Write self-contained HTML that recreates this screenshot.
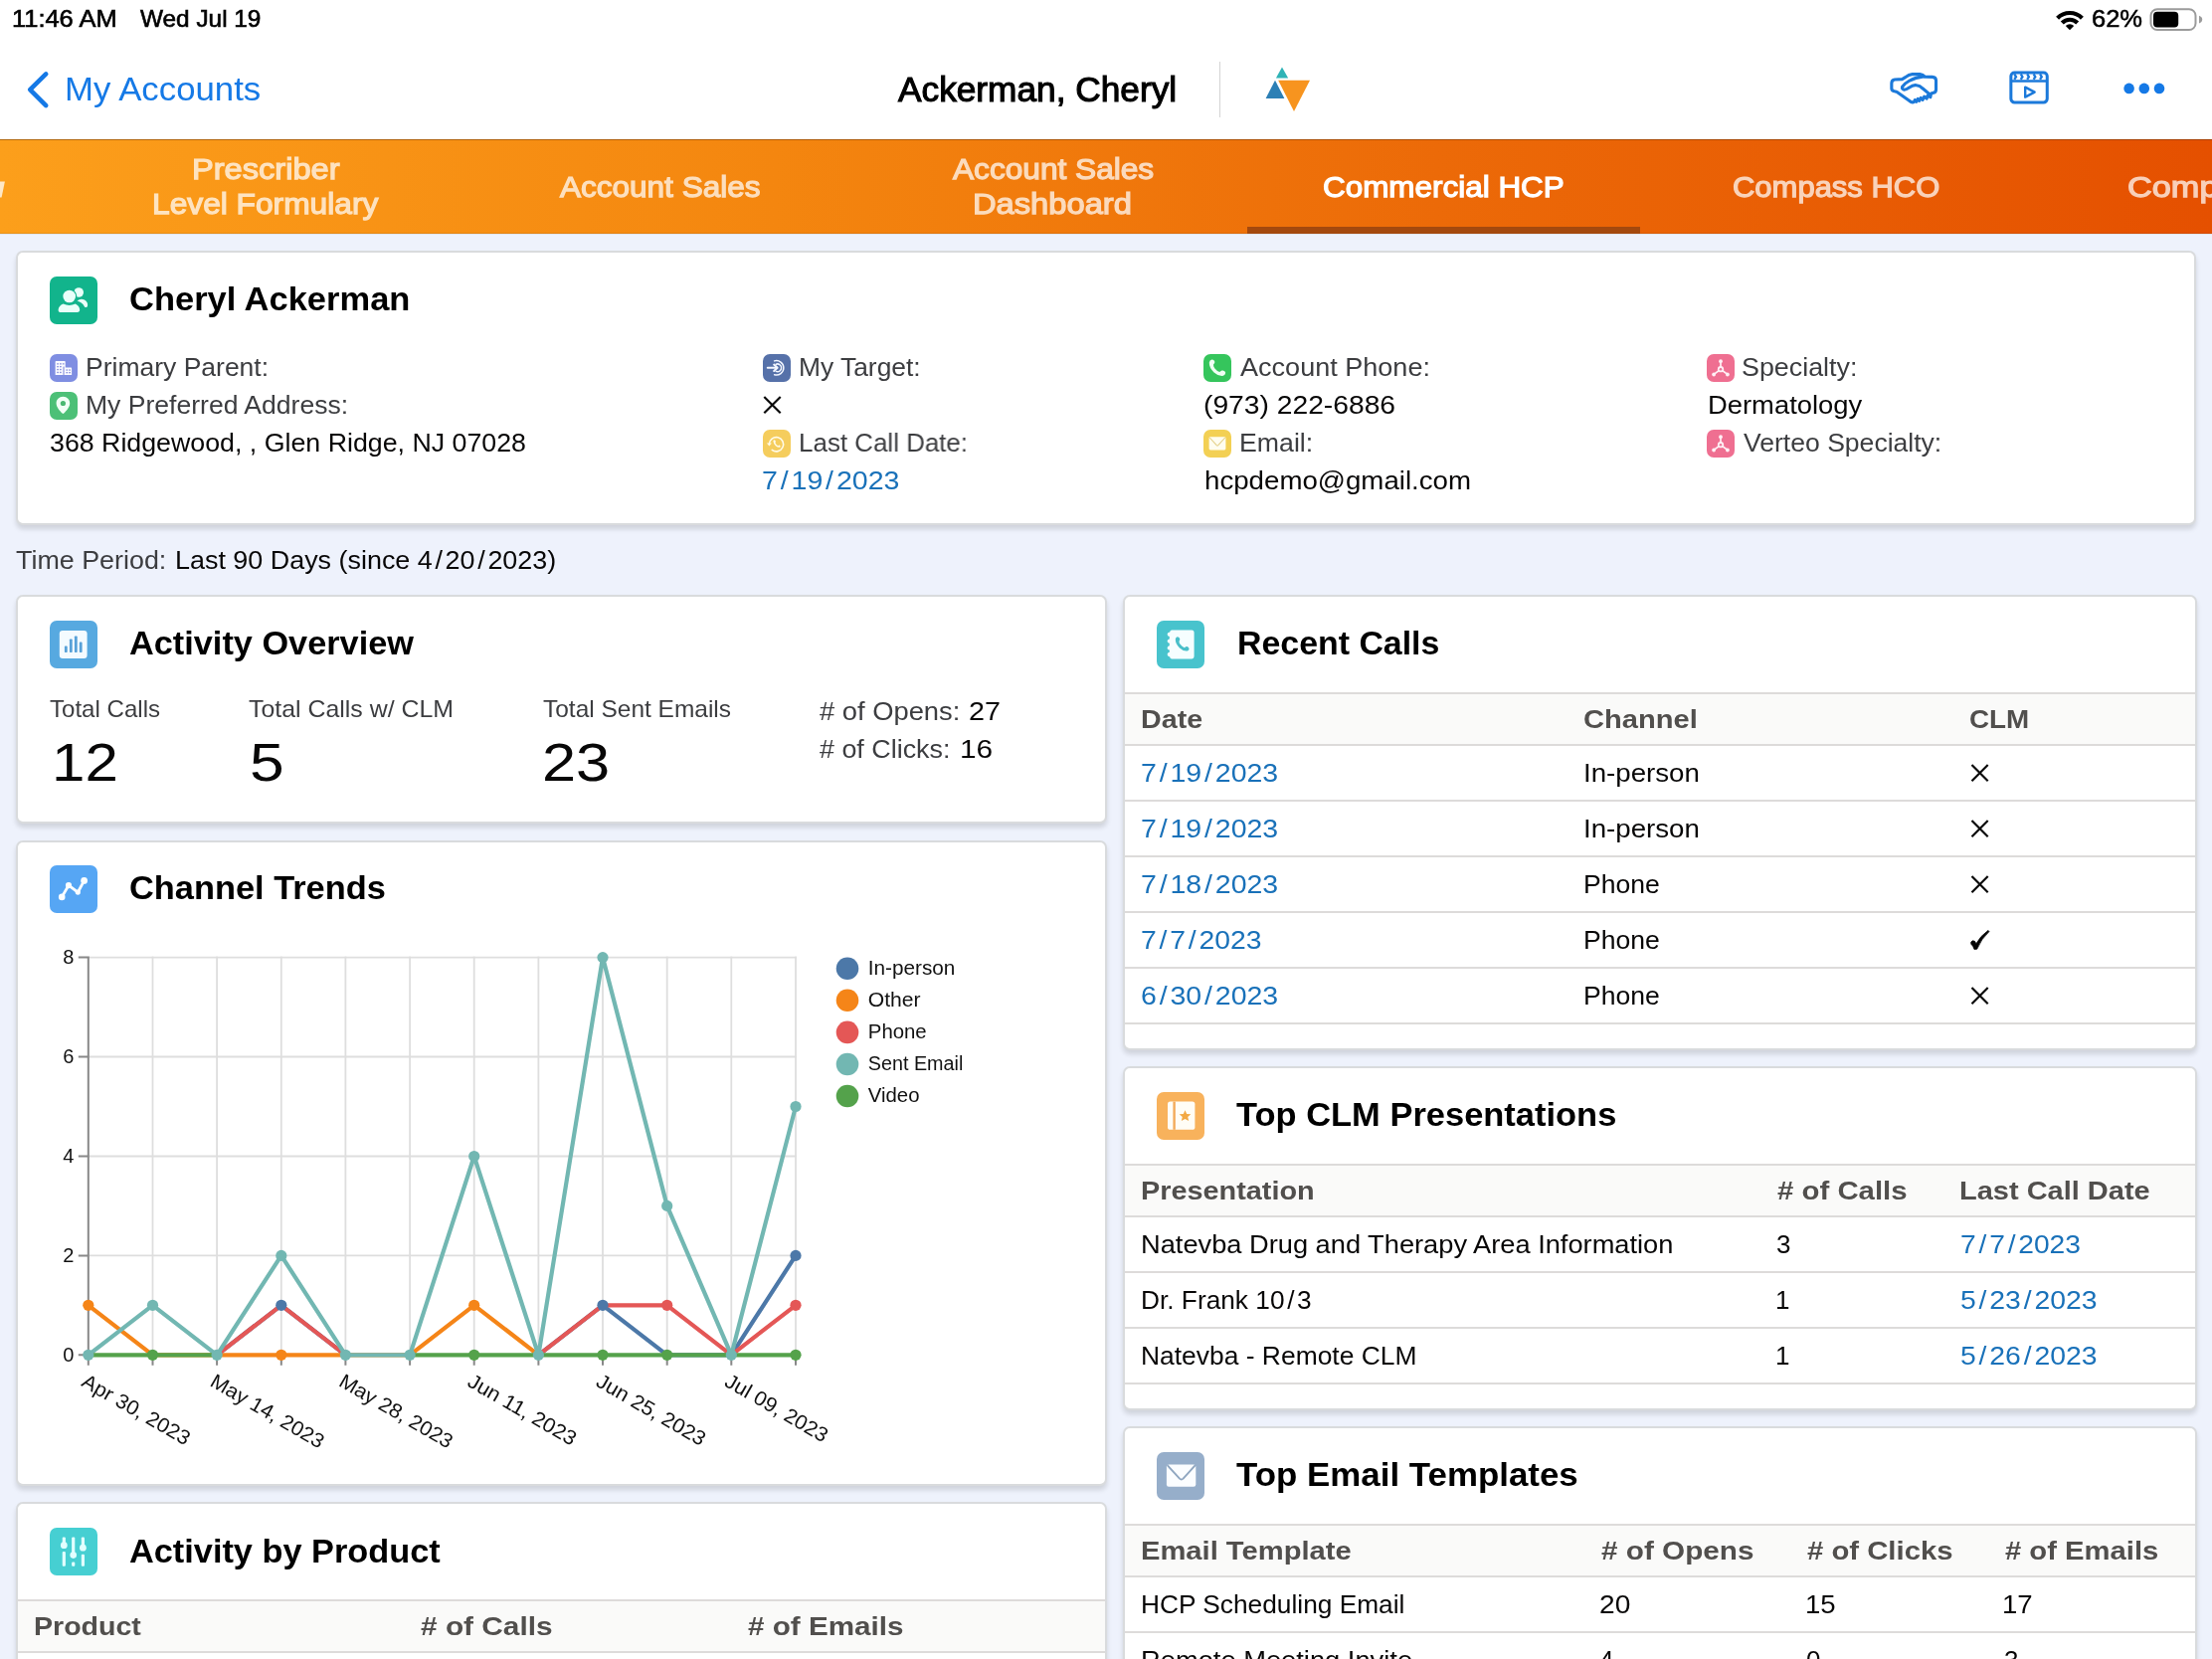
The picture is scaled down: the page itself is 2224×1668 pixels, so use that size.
<!DOCTYPE html>
<html><head><meta charset="utf-8"><title>Ackerman, Cheryl</title>
<style>
html,body{margin:0;padding:0;width:2224px;height:1668px;overflow:hidden;}
body{background:#eef2fc;font-family:'Liberation Sans', sans-serif;}
#root{position:relative;width:2224px;height:1668px;overflow:hidden;background:#eef2fc;}
.t{position:absolute;white-space:pre;transform-origin:0 0;will-change:transform;}
.card{position:absolute;background:#fff;border:2px solid #d9dbdd;border-radius:7px;box-shadow:0 4px 5px rgba(0,0,0,0.13);box-sizing:border-box;}
.hl{position:absolute;height:2px;background:#dddbda;}
.th{position:absolute;background:#fafaf9;}
.abs{position:absolute;}
</style></head><body><div id="root">
<!-- top white bars -->
<div class="abs" style="left:0;top:0;width:2224px;height:140px;background:#fff"></div>
<!-- orange tab bar -->
<div class="abs" style="left:0;top:140px;width:2224px;height:95px;background:linear-gradient(90deg,#fc9f1b 0%,#f4860f 35%,#ec6a08 65%,#e55000 100%)"></div>
<div class="abs" style="left:0;top:140px;width:2224px;height:1px;background:rgba(90,40,0,0.45)"></div>
<div class="abs" style="left:0;top:234px;width:2224px;height:2px;background:linear-gradient(180deg,rgba(0,0,0,0.10),rgba(0,0,0,0.03))"></div>
<div class="abs" style="left:1254px;top:228px;width:395px;height:7px;background:#a4490e"></div>
<!-- nav divider -->
<div class="abs" style="left:1226px;top:62px;width:1px;height:56px;background:#d4d4d4"></div>

<!-- cards -->
<div class="card" style="left:16px;top:252px;width:2192px;height:276px"></div>
<div class="card" style="left:16px;top:598px;width:1097px;height:230px"></div>
<div class="card" style="left:16px;top:845px;width:1097px;height:649px"></div>
<div class="card" style="left:16px;top:1510px;width:1097px;height:300px"></div>
<div class="card" style="left:1129px;top:598px;width:1080px;height:458px"></div>
<div class="card" style="left:1129px;top:1072px;width:1080px;height:346px"></div>
<div class="card" style="left:1129px;top:1434px;width:1080px;height:300px"></div>

<!-- Activity by Product table header -->
<div class="th" style="left:18px;top:1610px;width:1093px;height:50px"></div>
<div class="hl" style="left:18px;top:1608px;width:1093px"></div>
<div class="hl" style="left:18px;top:1660px;width:1093px"></div>

<!-- Recent Calls table -->
<div class="th" style="left:1131px;top:698px;width:1076px;height:50px"></div>
<div class="hl" style="left:1131px;top:696px;width:1076px"></div>
<div class="hl" style="left:1131px;top:748px;width:1076px"></div>
<div class="hl" style="left:1131px;top:804px;width:1076px"></div>
<div class="hl" style="left:1131px;top:860px;width:1076px"></div>
<div class="hl" style="left:1131px;top:916px;width:1076px"></div>
<div class="hl" style="left:1131px;top:972px;width:1076px"></div>
<div class="hl" style="left:1131px;top:1028px;width:1076px"></div>

<!-- Top CLM table -->
<div class="th" style="left:1131px;top:1172px;width:1076px;height:50px"></div>
<div class="hl" style="left:1131px;top:1170px;width:1076px"></div>
<div class="hl" style="left:1131px;top:1222px;width:1076px"></div>
<div class="hl" style="left:1131px;top:1278px;width:1076px"></div>
<div class="hl" style="left:1131px;top:1334px;width:1076px"></div>
<div class="hl" style="left:1131px;top:1390px;width:1076px"></div>

<!-- Email table -->
<div class="th" style="left:1131px;top:1534px;width:1076px;height:50px"></div>
<div class="hl" style="left:1131px;top:1532px;width:1076px"></div>
<div class="hl" style="left:1131px;top:1584px;width:1076px"></div>
<div class="hl" style="left:1131px;top:1640px;width:1076px"></div>

<div class="t" style="left:11.6px;top:7.9px;font:normal 23.6px/23.6px 'Liberation Sans', sans-serif;color:#000;transform:scaleX(1.0779);-webkit-text-stroke:0.6px #000;">11:46 AM</div>
<div class="t" style="left:140.7px;top:7.9px;font:normal 23.6px/23.6px 'Liberation Sans', sans-serif;color:#000;transform:scaleX(1.0325);-webkit-text-stroke:0.6px #000;">Wed Jul 19</div>
<div class="t" style="left:2102.9px;top:7.8px;font:normal 23px/23px 'Liberation Sans', sans-serif;color:#000;transform:scaleX(1.1089);-webkit-text-stroke:0.5px #000;">62%</div>
<div class="t" style="left:64.6px;top:74.0px;font:normal 32.5px/32.5px 'Liberation Sans', sans-serif;color:#1579e6;transform:scaleX(1.0706);">My Accounts</div>
<div class="t" style="left:903.4px;top:72.7px;font:normal 34.5px/34.5px 'Liberation Sans', sans-serif;color:#000;transform:scaleX(1.0216);-webkit-text-stroke:1.1px #000;">Ackerman, Cheryl</div>
<div class="t" style="left:192.8px;top:155.1px;font:normal 30px/30px 'Liberation Sans', sans-serif;color:#fff;opacity:0.73;transform:scaleX(1.0867);-webkit-text-stroke:1.25px currentColor;">Prescriber</div>
<div class="t" style="left:153.4px;top:189.5px;font:normal 30px/30px 'Liberation Sans', sans-serif;color:#fff;opacity:0.73;transform:scaleX(1.0570);-webkit-text-stroke:1.25px currentColor;">Level Formulary</div>
<div class="t" style="left:562.8px;top:173.2px;font:normal 30px/30px 'Liberation Sans', sans-serif;color:#fff;opacity:0.73;transform:scaleX(1.0505);-webkit-text-stroke:1.25px currentColor;">Account Sales</div>
<div class="t" style="left:957.7px;top:155.1px;font:normal 30px/30px 'Liberation Sans', sans-serif;color:#fff;opacity:0.73;transform:scaleX(1.0542);-webkit-text-stroke:1.25px currentColor;">Account Sales</div>
<div class="t" style="left:977.5px;top:189.5px;font:normal 30px/30px 'Liberation Sans', sans-serif;color:#fff;opacity:0.73;transform:scaleX(1.0895);-webkit-text-stroke:1.25px currentColor;">Dashboard</div>
<div class="t" style="left:1330.0px;top:173.2px;font:normal 30px/30px 'Liberation Sans', sans-serif;color:#fff;transform:scaleX(1.0478);-webkit-text-stroke:1.25px currentColor;">Commercial HCP</div>
<div class="t" style="left:1741.9px;top:173.2px;font:normal 30px/30px 'Liberation Sans', sans-serif;color:#fff;opacity:0.73;transform:scaleX(1.0325);-webkit-text-stroke:1.25px currentColor;">Compass HCO</div>
<div class="t" style="left:2138.9px;top:173.2px;font:normal 30px/30px 'Liberation Sans', sans-serif;color:#fff;opacity:0.73;transform:scaleX(1.1429);-webkit-text-stroke:1.25px currentColor;">Compass HCP</div>
<div class="t" style="left:129.9px;top:284.1px;font:bold 33px/33px 'Liberation Sans', sans-serif;color:#000;transform:scaleX(1.0449);">Cheryl Ackerman</div>
<div class="t" style="left:86.0px;top:355.9px;font:normal 26px/26px 'Liberation Sans', sans-serif;color:#3c3d40;transform:scaleX(1.0193);">Primary Parent:</div>
<div class="t" style="left:86.0px;top:393.9px;font:normal 26px/26px 'Liberation Sans', sans-serif;color:#3c3d40;transform:scaleX(1.0213);">My Preferred Address:</div>
<div class="t" style="left:49.6px;top:431.9px;font:normal 26px/26px 'Liberation Sans', sans-serif;color:#080707;transform:scaleX(1.0292);">368 Ridgewood, , Glen Ridge, NJ 07028</div>
<div class="t" style="left:802.6px;top:355.9px;font:normal 26px/26px 'Liberation Sans', sans-serif;color:#3c3d40;transform:scaleX(1.0145);">My Target:</div>
<div class="t" style="left:802.6px;top:431.9px;font:normal 26px/26px 'Liberation Sans', sans-serif;color:#3c3d40;transform:scaleX(0.9970);">Last Call Date:</div>
<div class="t" style="left:765.9px;top:469.9px;font:normal 26px/26px 'Liberation Sans', sans-serif;color:#1971b9;transform:scaleX(1.0976);">7<span style="margin:0 0.1em">/</span>19<span style="margin:0 0.1em">/</span>2023</div>
<div class="t" style="left:1247.0px;top:355.9px;font:normal 26px/26px 'Liberation Sans', sans-serif;color:#3c3d40;transform:scaleX(1.0403);">Account Phone:</div>
<div class="t" style="left:1210.1px;top:393.9px;font:normal 26px/26px 'Liberation Sans', sans-serif;color:#080707;transform:scaleX(1.0857);">(973) 222-6886</div>
<div class="t" style="left:1246.1px;top:431.9px;font:normal 26px/26px 'Liberation Sans', sans-serif;color:#3c3d40;transform:scaleX(1.0265);">Email:</div>
<div class="t" style="left:1210.9px;top:469.9px;font:normal 26px/26px 'Liberation Sans', sans-serif;color:#080707;transform:scaleX(1.0645);">hcpdemo@gmail.com</div>
<div class="t" style="left:1750.9px;top:355.9px;font:normal 26px/26px 'Liberation Sans', sans-serif;color:#3c3d40;transform:scaleX(1.0324);">Specialty:</div>
<div class="t" style="left:1716.7px;top:393.9px;font:normal 26px/26px 'Liberation Sans', sans-serif;color:#080707;transform:scaleX(1.0531);">Dermatology</div>
<div class="t" style="left:1753.0px;top:431.9px;font:normal 26px/26px 'Liberation Sans', sans-serif;color:#3c3d40;transform:scaleX(1.0212);">Verteo Specialty:</div>
<div class="t" style="left:15.5px;top:549.7px;font:normal 26px/26px 'Liberation Sans', sans-serif;color:#3c3d40;transform:scaleX(1.0336);">Time Period:</div>
<div class="t" style="left:176.2px;top:549.7px;font:normal 26px/26px 'Liberation Sans', sans-serif;color:#080707;transform:scaleX(1.0349);">Last 90 Days (since 4<span style="margin:0 0.1em">/</span>20<span style="margin:0 0.1em">/</span>2023)</div>
<div class="t" style="left:129.9px;top:629.8px;font:bold 33px/33px 'Liberation Sans', sans-serif;color:#000;transform:scaleX(1.0394);">Activity Overview</div>
<div class="t" style="left:49.6px;top:701.8px;font:normal 23.6px/23.6px 'Liberation Sans', sans-serif;color:#3c3d40;transform:scaleX(1.0206);">Total Calls</div>
<div class="t" style="left:249.5px;top:701.8px;font:normal 23.6px/23.6px 'Liberation Sans', sans-serif;color:#3c3d40;transform:scaleX(1.0549);">Total Calls w/ CLM</div>
<div class="t" style="left:546.2px;top:701.8px;font:normal 23.6px/23.6px 'Liberation Sans', sans-serif;color:#3c3d40;transform:scaleX(1.0370);">Total Sent Emails</div>
<div class="t" style="left:51.7px;top:740.2px;font:normal 53.5px/53.5px 'Liberation Sans', sans-serif;color:#080707;transform:scaleX(1.1226);">12</div>
<div class="t" style="left:250.9px;top:740.2px;font:normal 53.5px/53.5px 'Liberation Sans', sans-serif;color:#080707;transform:scaleX(1.1640);">5</div>
<div class="t" style="left:545.2px;top:740.2px;font:normal 53.5px/53.5px 'Liberation Sans', sans-serif;color:#080707;transform:scaleX(1.1463);">23</div>
<div class="t" style="left:824.3px;top:702.1px;font:normal 26px/26px 'Liberation Sans', sans-serif;color:#3c3d40;transform:scaleX(1.0515);"># of Opens:</div>
<div class="t" style="left:973.6px;top:702.1px;font:normal 26px/26px 'Liberation Sans', sans-serif;color:#080707;transform:scaleX(1.1037);">27</div>
<div class="t" style="left:824.3px;top:739.9px;font:normal 26px/26px 'Liberation Sans', sans-serif;color:#3c3d40;transform:scaleX(1.0336);"># of Clicks:</div>
<div class="t" style="left:965.2px;top:739.9px;font:normal 26px/26px 'Liberation Sans', sans-serif;color:#080707;transform:scaleX(1.1462);">16</div>
<div class="t" style="left:129.6px;top:876.0px;font:bold 33px/33px 'Liberation Sans', sans-serif;color:#000;transform:scaleX(1.0416);">Channel Trends</div>
<div class="t" style="left:129.6px;top:1543.0px;font:bold 33px/33px 'Liberation Sans', sans-serif;color:#000;transform:scaleX(1.0398);">Activity by Product</div>
<div class="t" style="left:34.0px;top:1622.0px;font:bold 26.5px/26.5px 'Liberation Sans', sans-serif;color:#514f4d;transform:scaleX(1.0776);">Product</div>
<div class="t" style="left:422.8px;top:1622.0px;font:bold 26.5px/26.5px 'Liberation Sans', sans-serif;color:#514f4d;transform:scaleX(1.1256);"># of Calls</div>
<div class="t" style="left:751.9px;top:1622.0px;font:bold 26.5px/26.5px 'Liberation Sans', sans-serif;color:#514f4d;transform:scaleX(1.1180);"># of Emails</div>
<div class="t" style="left:1243.5px;top:629.9px;font:bold 33px/33px 'Liberation Sans', sans-serif;color:#000;transform:scaleX(1.0267);">Recent Calls</div>
<div class="t" style="left:1147.2px;top:709.5px;font:bold 26.5px/26.5px 'Liberation Sans', sans-serif;color:#514f4d;transform:scaleX(1.0818);">Date</div>
<div class="t" style="left:1591.7px;top:709.5px;font:bold 26.5px/26.5px 'Liberation Sans', sans-serif;color:#514f4d;transform:scaleX(1.0980);">Channel</div>
<div class="t" style="left:1979.8px;top:709.5px;font:bold 26.5px/26.5px 'Liberation Sans', sans-serif;color:#514f4d;transform:scaleX(1.0491);">CLM</div>
<div class="t" style="left:1146.5px;top:763.9px;font:normal 26px/26px 'Liberation Sans', sans-serif;color:#1971b9;transform:scaleX(1.0960);">7<span style="margin:0 0.1em">/</span>19<span style="margin:0 0.1em">/</span>2023</div>
<div class="t" style="left:1591.9px;top:763.9px;font:normal 26px/26px 'Liberation Sans', sans-serif;color:#080707;transform:scaleX(1.0642);">In-person</div>
<div class="t" style="left:1146.5px;top:819.9px;font:normal 26px/26px 'Liberation Sans', sans-serif;color:#1971b9;transform:scaleX(1.0960);">7<span style="margin:0 0.1em">/</span>19<span style="margin:0 0.1em">/</span>2023</div>
<div class="t" style="left:1591.9px;top:819.9px;font:normal 26px/26px 'Liberation Sans', sans-serif;color:#080707;transform:scaleX(1.0642);">In-person</div>
<div class="t" style="left:1146.5px;top:875.9px;font:normal 26px/26px 'Liberation Sans', sans-serif;color:#1971b9;transform:scaleX(1.0960);">7<span style="margin:0 0.1em">/</span>18<span style="margin:0 0.1em">/</span>2023</div>
<div class="t" style="left:1592.0px;top:875.9px;font:normal 26px/26px 'Liberation Sans', sans-serif;color:#080707;transform:scaleX(1.0208);">Phone</div>
<div class="t" style="left:1146.5px;top:931.9px;font:normal 26px/26px 'Liberation Sans', sans-serif;color:#1971b9;transform:scaleX(1.0891);">7<span style="margin:0 0.1em">/</span>7<span style="margin:0 0.1em">/</span>2023</div>
<div class="t" style="left:1592.0px;top:931.9px;font:normal 26px/26px 'Liberation Sans', sans-serif;color:#080707;transform:scaleX(1.0208);">Phone</div>
<div class="t" style="left:1146.5px;top:987.9px;font:normal 26px/26px 'Liberation Sans', sans-serif;color:#1971b9;transform:scaleX(1.0960);">6<span style="margin:0 0.1em">/</span>30<span style="margin:0 0.1em">/</span>2023</div>
<div class="t" style="left:1592.0px;top:987.9px;font:normal 26px/26px 'Liberation Sans', sans-serif;color:#080707;transform:scaleX(1.0208);">Phone</div>
<div class="t" style="left:1242.6px;top:1103.9px;font:bold 33px/33px 'Liberation Sans', sans-serif;color:#000;transform:scaleX(1.0444);">Top CLM Presentations</div>
<div class="t" style="left:1147.2px;top:1183.8px;font:bold 26.5px/26.5px 'Liberation Sans', sans-serif;color:#514f4d;transform:scaleX(1.0879);">Presentation</div>
<div class="t" style="left:1786.7px;top:1183.8px;font:bold 26.5px/26.5px 'Liberation Sans', sans-serif;color:#514f4d;transform:scaleX(1.1085);"># of Calls</div>
<div class="t" style="left:1969.5px;top:1183.8px;font:bold 26.5px/26.5px 'Liberation Sans', sans-serif;color:#514f4d;transform:scaleX(1.0936);">Last Call Date</div>
<div class="t" style="left:1147.3px;top:1237.9px;font:normal 26px/26px 'Liberation Sans', sans-serif;color:#080707;transform:scaleX(1.0474);">Natevba Drug and Therapy Area Information</div>
<div class="t" style="left:1786.0px;top:1237.9px;font:normal 26px/26px 'Liberation Sans', sans-serif;color:#080707;">3</div>
<div class="t" style="left:1970.6px;top:1237.9px;font:normal 26px/26px 'Liberation Sans', sans-serif;color:#1971b9;transform:scaleX(1.0836);">7<span style="margin:0 0.1em">/</span>7<span style="margin:0 0.1em">/</span>2023</div>
<div class="t" style="left:1147.4px;top:1293.9px;font:normal 26px/26px 'Liberation Sans', sans-serif;color:#080707;transform:scaleX(1.0102);">Dr. Frank 10<span style="margin:0 0.1em">/</span>3</div>
<div class="t" style="left:1785.0px;top:1293.9px;font:normal 26px/26px 'Liberation Sans', sans-serif;color:#080707;">1</div>
<div class="t" style="left:1970.6px;top:1293.9px;font:normal 26px/26px 'Liberation Sans', sans-serif;color:#1971b9;transform:scaleX(1.0911);">5<span style="margin:0 0.1em">/</span>23<span style="margin:0 0.1em">/</span>2023</div>
<div class="t" style="left:1147.4px;top:1349.9px;font:normal 26px/26px 'Liberation Sans', sans-serif;color:#080707;transform:scaleX(1.0160);">Natevba - Remote CLM</div>
<div class="t" style="left:1785.0px;top:1349.9px;font:normal 26px/26px 'Liberation Sans', sans-serif;color:#080707;">1</div>
<div class="t" style="left:1970.6px;top:1349.9px;font:normal 26px/26px 'Liberation Sans', sans-serif;color:#1971b9;transform:scaleX(1.0911);">5<span style="margin:0 0.1em">/</span>26<span style="margin:0 0.1em">/</span>2023</div>
<div class="t" style="left:1242.6px;top:1465.9px;font:bold 33px/33px 'Liberation Sans', sans-serif;color:#000;transform:scaleX(1.0571);">Top Email Templates</div>
<div class="t" style="left:1147.2px;top:1546.3px;font:bold 26.5px/26.5px 'Liberation Sans', sans-serif;color:#514f4d;transform:scaleX(1.1000);">Email Template</div>
<div class="t" style="left:1609.7px;top:1546.3px;font:bold 26.5px/26.5px 'Liberation Sans', sans-serif;color:#514f4d;transform:scaleX(1.1206);"># of Opens</div>
<div class="t" style="left:1816.9px;top:1546.3px;font:bold 26.5px/26.5px 'Liberation Sans', sans-serif;color:#514f4d;transform:scaleX(1.1053);"># of Clicks</div>
<div class="t" style="left:2015.5px;top:1546.3px;font:bold 26.5px/26.5px 'Liberation Sans', sans-serif;color:#514f4d;transform:scaleX(1.1029);"># of Emails</div>
<div class="t" style="left:1147.4px;top:1599.8px;font:normal 26px/26px 'Liberation Sans', sans-serif;color:#080707;transform:scaleX(1.0108);">HCP Scheduling Email</div>
<div class="t" style="left:1607.6px;top:1599.8px;font:normal 26px/26px 'Liberation Sans', sans-serif;color:#080707;transform:scaleX(1.0815);">20</div>
<div class="t" style="left:1814.8px;top:1599.8px;font:normal 26px/26px 'Liberation Sans', sans-serif;color:#080707;transform:scaleX(1.0615);">15</div>
<div class="t" style="left:2013.4px;top:1599.8px;font:normal 26px/26px 'Liberation Sans', sans-serif;color:#080707;transform:scaleX(1.0615);">17</div>
<div class="t" style="left:1147.3px;top:1655.8px;font:normal 26px/26px 'Liberation Sans', sans-serif;color:#080707;transform:scaleX(1.0498);">Remote Meeting Invite</div>
<div class="t" style="left:1607.7px;top:1655.8px;font:normal 26px/26px 'Liberation Sans', sans-serif;color:#080707;">4</div>
<div class="t" style="left:1815.9px;top:1655.8px;font:normal 26px/26px 'Liberation Sans', sans-serif;color:#080707;">0</div>
<div class="t" style="left:2014.5px;top:1655.8px;font:normal 26px/26px 'Liberation Sans', sans-serif;color:#080707;">3</div>
<!-- status: wifi -->
<svg class="abs" style="left:2064px;top:6px" width="36" height="28" viewBox="2064 6 36 28">
<g fill="none" stroke="#000" stroke-width="4.2">
<path d="M2068.6 18.2 A17.4 17.4 0 0 1 2093.4 18.2"/>
<path d="M2073.3 23 A10.8 10.8 0 0 1 2088.7 23"/>
</g>
<path d="M2081 30.2 L2076.8 26 A5.9 5.9 0 0 1 2085.2 26 Z" fill="#000"/>
</svg>
<!-- battery -->
<svg class="abs" style="left:2158px;top:5px" width="60" height="30" viewBox="2158 5 60 30">
<rect x="2162.5" y="9.2" width="45" height="20.8" rx="6.5" fill="none" stroke="#9b9b9b" stroke-width="2"/>
<rect x="2165" y="11.8" width="25.2" height="15.8" rx="4" fill="#000"/>
<path d="M2211 15.8 Q2214.2 17 2214.2 19.6 Q2214.2 22.4 2211 23.6 Z" fill="#9b9b9b"/>
</svg>
<!-- back chevron -->
<svg class="abs" style="left:20px;top:66px" width="36" height="50" viewBox="20 66 36 50">
<path d="M46.2 74.4 L30.2 90.2 L46.2 106.1" fill="none" stroke="#1579e6" stroke-width="4.6" stroke-linecap="round" stroke-linejoin="round"/>
</svg>
<!-- logo -->
<svg class="abs" style="left:1268px;top:62px" width="54" height="56" viewBox="1268 62 54 56">
<path d="M1289 67.6 L1282.9 78.4 L1295.2 78.4 Z" fill="#2fb3b6"/>
<path d="M1282 80.8 L1272.6 99 L1291.4 99 Z" fill="#2c7fb5"/>
<path d="M1285.2 80.8 L1317 80.8 L1301 112 Z" fill="#f7941f"/>
</svg>
<!-- handshake + clapper (coords in 11.64x zoom space) -->
<svg class="abs" style="left:1890px;top:60px" width="190" height="58" viewBox="0 0 2212 675">
<g fill="none" stroke="#1b79da" stroke-width="36" stroke-linejoin="round" stroke-linecap="round">
<path d="M262 228 L175 232 Q138 236 138 275 L138 340 Q140 370 182 372 L205 380 L345 480 Q380 512 402 492 L410 472 L428 492 L445 458 L462 482 L480 446 L502 470 L520 432 L548 456 L560 420 L592 438 L600 396 L630 388 Q658 380 658 345 L658 240 Q655 204 615 202 L528 200 Q505 170 470 168 L380 170 Q340 172 300 205 Z"/>
<path d="M515 196 Q420 205 340 250 Q285 280 262 318 Q255 345 285 352 Q310 350 345 325 Q395 290 430 300 Q470 305 500 335 L592 412"/>
</g>
<g fill="none" stroke="#1b79da" stroke-width="35" stroke-linejoin="round">
<rect x="1535" y="150" width="424" height="350" rx="42"/>
<path d="M1535 250 L1959 250" stroke-width="28"/>
<path d="M1702 322 L1702 438 L1812 380 Z" stroke-width="28"/>
</g>
<g fill="none" stroke="#1b79da" stroke-width="27" stroke-linejoin="miter">
<path d="M1575 168 L1595 200 L1575 232"/>
<path d="M1650 168 L1670 200 L1650 232"/>
<path d="M1725 168 L1745 200 L1725 232"/>
<path d="M1800 168 L1820 200 L1800 232"/>
<path d="M1875 168 L1895 200 L1875 232"/>
</g>
</svg>
<!-- more dots -->
<svg class="abs" style="left:2130px;top:80px" width="52" height="18" viewBox="2130 80 52 18">
<circle cx="2140.6" cy="88.9" r="5.3" fill="#1579e6"/><circle cx="2155.8" cy="88.9" r="5.3" fill="#1579e6"/><circle cx="2171" cy="88.9" r="5.3" fill="#1579e6"/>
</svg>

<!-- ===== 48px card icons ===== -->
<!-- people -->
<svg class="abs" style="left:50px;top:278px" width="48" height="48" viewBox="0 0 48 48">
<rect width="48" height="48" rx="7" fill="#12b48c"/>
<circle cx="29.2" cy="16" r="4.8" fill="#e9fff9"/>
<path d="M27.6 24.4 Q31.2 21.6 35 23.6 Q38.8 26 38 30 Q37.2 31.4 35.2 30.8 Q34.4 28 31.4 26.2 Q29.6 25.2 27.6 24.4 Z" fill="#e9fff9"/>
<circle cx="19.7" cy="20" r="7.6" fill="#12b48c"/>
<circle cx="19.7" cy="20" r="6.3" fill="#e9fff9"/>
<path d="M8.6 33.4 Q9 29.5 13.5 27.6 Q19.7 30.2 25.8 27.6 Q30 29.6 30.2 33.6 Q30.2 36 27.6 36 L11.2 36 Q8.6 36 8.6 33.4 Z" fill="#e9fff9" stroke="#12b48c" stroke-width="0"/>
</svg>
<!-- activity overview -->
<svg class="abs" style="left:50px;top:624px" width="48" height="48" viewBox="0 0 48 48">
<rect width="48" height="48" rx="7" fill="#57a9e0"/>
<rect x="9.8" y="10" width="27.8" height="28" rx="3.2" fill="#f4fbff"/>
<g fill="#57a1d8"><rect x="14.9" y="25.6" width="2.8" height="6.4" rx="0.8"/><rect x="19.9" y="18.4" width="2.8" height="13.6" rx="0.8"/><rect x="24.9" y="15.5" width="2.8" height="16.5" rx="0.8"/><rect x="29.8" y="21.6" width="2.8" height="10.4" rx="0.8"/></g>
</svg>
<!-- channel trends -->
<svg class="abs" style="left:50px;top:870px" width="48" height="48" viewBox="0 0 48 48">
<rect width="48" height="48" rx="7" fill="#56a6f4"/>
<path d="M12.2 31.9 L19 20.1 L28.3 27.1 L34.6 15.4" fill="none" stroke="#fbfeff" stroke-width="2.9" stroke-linejoin="round" stroke-linecap="round"/>
<circle cx="12.2" cy="31.9" r="3.3" fill="#fbfeff"/><circle cx="19" cy="20.1" r="3.1" fill="#fbfeff"/><circle cx="28.3" cy="27.1" r="2.6" fill="#fbfeff"/><circle cx="34.6" cy="15.4" r="3.4" fill="#fbfeff"/>
</svg>
<!-- activity by product (sliders) -->
<svg class="abs" style="left:50px;top:1536px" width="48" height="48" viewBox="0 0 48 48">
<rect width="48" height="48" rx="7" fill="#46cfd2"/>
<g fill="#e2ffff">
<rect x="12.7" y="9.4" width="3.2" height="7" rx="1"/><circle cx="14.3" cy="17.7" r="3.4"/><rect x="12.7" y="24" width="3.2" height="14.8" rx="1"/>
<rect x="22.1" y="9.4" width="3.2" height="17" rx="1"/><circle cx="23.7" cy="27.6" r="3.3"/><rect x="22.1" y="34.6" width="3.2" height="4.2" rx="1"/>
<rect x="31.8" y="9.4" width="3.2" height="9.5" rx="1"/><circle cx="33.4" cy="20.2" r="3.4"/><rect x="31.8" y="26.7" width="3.2" height="12.1" rx="1"/>
</g>
</svg>
<!-- recent calls -->
<svg class="abs" style="left:1163px;top:624px" width="48" height="48" viewBox="0 0 48 48">
<rect width="48" height="48" rx="7" fill="#48c3cd"/>
<path d="M15.2 9.4 L35.2 9.4 Q37.6 9.4 37.6 11.8 L37.6 36 Q37.6 38.4 35.2 38.4 L15.2 38.4 Q13.4 38.4 13.2 36.4 Q10.6 36 10.6 34 Q10.6 32.2 12.8 31.8 L12.8 29.6 Q10.6 29.2 10.6 27.4 Q10.6 25.6 12.8 25.2 L12.8 22.8 Q10.6 22.4 10.6 20.6 Q10.6 18.8 12.8 18.4 L12.8 16 Q10.6 15.6 10.6 13.8 Q10.6 12 13.2 11.6 Q13.4 9.4 15.2 9.4 Z" fill="#f6feff"/>
<path d="M20.8 16.2 Q19.2 16.6 18.8 18.4 Q18.6 23 23 27.4 Q27.2 31.2 31 30.4 Q32.6 29.8 32.6 28.2 Q32.2 26.6 30.4 26 Q29 26 28 27.2 Q25.6 26.4 23.6 23.8 Q22.2 22 22.6 20.4 Q23.6 19.4 23.2 18 Q22.4 16.2 20.8 16.2 Z" fill="#48bfc9"/>
</svg>
<!-- top CLM -->
<svg class="abs" style="left:1163px;top:1098px" width="48" height="48" viewBox="0 0 48 48">
<rect width="48" height="48" rx="7" fill="#f8b25c"/>
<rect x="11" y="9.6" width="27.4" height="28.2" rx="2.6" fill="#fffdf6"/>
<rect x="16.4" y="9.6" width="2.4" height="28.2" fill="#f3ab5a"/>
<path d="M28.5 18.2 L30.2 22 L34.3 22.3 L31.2 25 L32.2 29 L28.5 26.9 L24.8 29 L25.8 25 L22.7 22.3 L26.8 22 Z" fill="#f3a944"/>
</svg>
<!-- top email -->
<svg class="abs" style="left:1163px;top:1460px" width="48" height="48" viewBox="0 0 48 48">
<rect width="48" height="48" rx="7" fill="#96aeca"/>
<rect x="9.9" y="12.4" width="29.4" height="22.4" rx="2.2" fill="#fbfdff"/>
<path d="M10.6 13.2 L23 26.6 Q24.8 28.2 26.6 26.6 L38.8 13.2" fill="none" stroke="#8fa6c0" stroke-width="1.9" stroke-linejoin="round"/>
</svg>

<!-- ===== 28px field icons ===== -->
<!-- building -->
<svg class="abs" style="left:50px;top:356px" width="28" height="28" viewBox="0 0 28 28">
<rect width="28" height="28" rx="7" fill="#7f8ee2"/>
<path d="M5.6 7.8 Q5.6 7 6.4 7 L14.9 7 Q15.7 7 15.7 7.8 L15.7 13.6 L21.3 13.6 Q22.1 13.6 22.1 14.4 L22.1 20.9 L5.6 20.9 Z" fill="#fbfbff"/>
<g fill="#8b93dc"><rect x="7.2" y="9.2" width="1.7" height="1.3"/><rect x="10" y="9.2" width="1.7" height="1.3"/><rect x="12.8" y="9.2" width="1.7" height="1.3"/>
<rect x="7.2" y="12" width="1.7" height="1.3"/><rect x="10" y="12" width="1.7" height="1.3"/>
<rect x="7.2" y="14.9" width="1.7" height="1.3"/><rect x="10" y="14.9" width="1.7" height="1.3"/>
<rect x="7.2" y="17.8" width="1.7" height="1.3"/><rect x="10" y="17.8" width="1.7" height="1.3"/>
<rect x="13.4" y="12.6" width="1.2" height="8.3"/>
<rect x="16.4" y="15.4" width="1.7" height="1.3"/><rect x="19.2" y="15.4" width="1.7" height="1.3"/><rect x="16.4" y="18" width="1.7" height="1.3"/><rect x="19.2" y="18" width="1.7" height="1.3"/></g>
</svg>
<!-- pin -->
<svg class="abs" style="left:50px;top:394px" width="28" height="28" viewBox="0 0 28 28">
<rect width="28" height="28" rx="7" fill="#4cc077"/>
<path d="M13.4 4.8 C17.4 4.8 20.2 7.8 20.2 11.4 C20.2 15.4 16.4 19 14.2 21.6 Q13.4 22.4 12.6 21.6 C10.4 19 6.6 15.4 6.6 11.4 C6.6 7.8 9.4 4.8 13.4 4.8 Z" fill="#f1fff6"/>
<circle cx="13.4" cy="11.5" r="2.6" fill="#4ab872"/>
</svg>
<!-- target -->
<svg class="abs" style="left:767px;top:356px" width="28" height="28" viewBox="0 0 28 28">
<rect width="28" height="28" rx="7" fill="#5671a9"/>
<g fill="none" stroke="#f2f6ff" stroke-linecap="round">
<path d="M11.6 6.9 A7.2 7.2 0 1 1 11.6 20.7" stroke-width="1.5"/>
<path d="M13.2 10.2 A3.9 3.9 0 1 1 13.2 17.4" stroke-width="1.5"/>
<path d="M4.8 13.8 L14 13.8" stroke-width="2.1"/>
<path d="M11.2 10.6 L14.6 13.8 L11.2 17" stroke-width="2.1" stroke-linejoin="round"/>
</g>
</svg>
<!-- call history -->
<svg class="abs" style="left:767px;top:432px" width="28" height="28" viewBox="0 0 28 28">
<rect width="28" height="28" rx="7" fill="#f5cd5d"/>
<path d="M6.4 14.6 A7.1 7.1 0 1 1 9.2 20.4" fill="none" stroke="#fffbe8" stroke-width="1.6" stroke-linecap="round"/>
<path d="M3.9 13.6 L6.4 16.6 L8.9 13.4 Z" fill="#fffbe8"/>
<path d="M11.3 10.3 Q10.4 10.6 10.4 11.6 Q10.6 14.2 12.8 16.2 Q14.8 18 17 17.8 Q17.8 17.4 17.6 16.6 Q17.2 15.8 16.2 15.6 L15.4 16.2 Q14 15.6 13 14.2 Q12.4 13.4 12.6 12.6 L13 11.8 Q12.6 10.4 11.3 10.3 Z" fill="#fffbe8"/>
</svg>
<!-- phone -->
<svg class="abs" style="left:1210px;top:356px" width="28" height="28" viewBox="0 0 28 28">
<rect width="28" height="28" rx="7" fill="#35c55c"/>
<path d="M8.4 5.4 Q6.2 6 5.8 8.4 Q5.6 13.4 10.6 18.4 Q15.4 22.6 20 21.8 Q22.2 21 22.2 18.8 Q21.8 17.2 19.6 16.6 Q18 16.2 17 17.4 L16.2 18 Q13.4 17 11.2 14.2 Q9.8 12.2 10 10.6 L10.8 9.6 Q11.6 8.6 11.2 7.2 Q10.4 5.2 8.4 5.4 Z" fill="#f0fff4"/>
</svg>
<!-- mail -->
<svg class="abs" style="left:1210px;top:432px" width="28" height="28" viewBox="0 0 28 28">
<rect width="28" height="28" rx="7" fill="#f3d054"/>
<rect x="5.6" y="7.2" width="16.8" height="13.2" rx="1.4" fill="#fffdf0"/>
<path d="M6.2 8 L13.2 15.6 Q14 16.4 14.8 15.6 L21.8 8" fill="none" stroke="#e3cf86" stroke-width="1.1"/>
</svg>
<!-- specialty x2 -->
<svg class="abs" style="left:1716px;top:356px" width="28" height="28" viewBox="0 0 28 28">
<rect width="28" height="28" rx="7" fill="#ef6f91"/>
<g stroke="#fff0f5" stroke-width="1.7" stroke-linecap="round"><path d="M14 15.2 L14 7.4"/><path d="M14 15.2 L7.2 20.4"/><path d="M14 15.2 L20.8 20.4"/></g>
<circle cx="14" cy="7.2" r="1.9" fill="#fff0f5"/><circle cx="7.1" cy="20.5" r="1.9" fill="#fff0f5"/><circle cx="20.9" cy="20.5" r="1.9" fill="#fff0f5"/>
<circle cx="14" cy="15.2" r="3.1" fill="#fff0f5"/><circle cx="14" cy="15.2" r="1.3" fill="#e8799a"/>
</svg>
<svg class="abs" style="left:1716px;top:432px" width="28" height="28" viewBox="0 0 28 28">
<rect width="28" height="28" rx="7" fill="#ef6f91"/>
<g stroke="#fff0f5" stroke-width="1.7" stroke-linecap="round"><path d="M14 15.2 L14 7.4"/><path d="M14 15.2 L7.2 20.4"/><path d="M14 15.2 L20.8 20.4"/></g>
<circle cx="14" cy="7.2" r="1.9" fill="#fff0f5"/><circle cx="7.1" cy="20.5" r="1.9" fill="#fff0f5"/><circle cx="20.9" cy="20.5" r="1.9" fill="#fff0f5"/>
<circle cx="14" cy="15.2" r="3.1" fill="#fff0f5"/><circle cx="14" cy="15.2" r="1.3" fill="#e8799a"/>
</svg>

<!-- ===== x / check marks ===== -->
<svg class="abs" style="left:765px;top:396px" width="24" height="24" viewBox="765 396 24 24"><path d="M768.3 399 L784.7 415.2 M784.7 399 L768.3 415.2" stroke="#0a0a0a" stroke-width="2.2" fill="none"/></svg>
<svg class="abs" style="left:1979px;top:766px" width="24" height="24" viewBox="0 0 24 24"><path d="M3.5 3 L19.7 19.2 M19.7 3 L3.5 19.2" stroke="#0a0a0a" stroke-width="2.2" fill="none"/></svg>
<svg class="abs" style="left:1979px;top:822px" width="24" height="24" viewBox="0 0 24 24"><path d="M3.5 3 L19.7 19.2 M19.7 3 L3.5 19.2" stroke="#0a0a0a" stroke-width="2.2" fill="none"/></svg>
<svg class="abs" style="left:1979px;top:878px" width="24" height="24" viewBox="0 0 24 24"><path d="M3.5 3 L19.7 19.2 M19.7 3 L3.5 19.2" stroke="#0a0a0a" stroke-width="2.2" fill="none"/></svg>
<svg class="abs" style="left:1979px;top:990px" width="24" height="24" viewBox="0 0 24 24"><path d="M3.5 3 L19.7 19.2 M19.7 3 L3.5 19.2" stroke="#0a0a0a" stroke-width="2.2" fill="none"/></svg>
<svg class="abs" style="left:1979px;top:932px" width="24" height="26" viewBox="0 0 24 26"><path d="M2.8 17.2 Q2 14.6 4.4 13.8 Q7 13.4 7.8 17 Q12 9 20 3.4 L21 4.6 Q13 12 8.8 22.2 L6 22.6 Q5 18.8 2.8 17.2 Z" fill="#050505" stroke="#050505" stroke-width="0.7" stroke-linejoin="round"/></svg>
<!-- tab-y-frag --><svg class="abs" style="left:0;top:180px" width="8" height="22" viewBox="0 180 8 22"><path d="M0 182.6 L4.9 182.6 L1.6 198.4 L0 198.4 Z" fill="#fff" opacity="0.75"/></svg>

<svg class="abs" style="left:0;top:930px;will-change:transform" width="1112" height="560" viewBox="0 930 1112 560" font-family="'Liberation Sans', sans-serif">
<path d="M153.5 961.6V1362.3 M218.1 961.6V1362.3 M282.8 961.6V1362.3 M347.4 961.6V1362.3 M412.1 961.6V1362.3 M476.7 961.6V1362.3 M541.4 961.6V1362.3 M606.0 961.6V1362.3 M670.7 961.6V1362.3 M735.3 961.6V1362.3 M800.0 961.6V1362.3 M88.8 1262.4H801.0 M88.8 1162.5H801.0 M88.8 1062.5H801.0 M88.8 962.6H801.0" stroke="#dedede" stroke-width="1.8" fill="none"/>
<path d="M88.8 961.6V1363.3 M78.8 1362.3H88.8 M78.8 1262.4H88.8 M78.8 1162.5H88.8 M78.8 1062.5H88.8 M78.8 962.6H88.8 M88.8 1362.3V1372.8 M153.5 1362.3V1372.8 M218.1 1362.3V1372.8 M282.8 1362.3V1372.8 M347.4 1362.3V1372.8 M412.1 1362.3V1372.8 M476.7 1362.3V1372.8 M541.4 1362.3V1372.8 M606.0 1362.3V1372.8 M670.7 1362.3V1372.8 M735.3 1362.3V1372.8 M800.0 1362.3V1372.8" stroke="#888" stroke-width="2" fill="none"/>
<text x="74.3" y="1369.1" font-size="20" text-anchor="end" fill="#111">0</text>
<text x="74.3" y="1269.2" font-size="20" text-anchor="end" fill="#111">2</text>
<text x="74.3" y="1169.3" font-size="20" text-anchor="end" fill="#111">4</text>
<text x="74.3" y="1069.3" font-size="20" text-anchor="end" fill="#111">6</text>
<text x="74.3" y="969.4" font-size="20" text-anchor="end" fill="#111">8</text>
<path d="M218.1 1362.3 L282.8 1312.3 L347.4 1362.3" stroke="#4c78a8" stroke-width="4.2" fill="none" stroke-linejoin="round" stroke-linecap="round"/>
<path d="M541.4 1362.3 L606.0 1312.3 L670.7 1362.3 L735.3 1362.3 L800.0 1262.4" stroke="#4c78a8" stroke-width="4.2" fill="none" stroke-linejoin="round" stroke-linecap="round"/>
<path d="M88.8 1312.3 L153.5 1362.3 L218.1 1362.3 L282.8 1362.3 L347.4 1362.3 L412.1 1362.3 L476.7 1312.3 L541.4 1362.3" stroke="#f58518" stroke-width="4.2" fill="none" stroke-linejoin="round" stroke-linecap="round"/>
<path d="M218.1 1362.3 L282.8 1312.3 L347.4 1362.3" stroke="#e45756" stroke-width="4.2" fill="none" stroke-linejoin="round" stroke-linecap="round"/>
<path d="M541.4 1362.3 L606.0 1312.3 L670.7 1312.3 L735.3 1362.3 L800.0 1312.3" stroke="#e45756" stroke-width="4.2" fill="none" stroke-linejoin="round" stroke-linecap="round"/>
<path d="M88.8 1362.3 L153.5 1312.3 L218.1 1362.3 L282.8 1262.4 L347.4 1362.3 L412.1 1362.3 L476.7 1162.5 L541.4 1362.3 L606.0 962.6 L670.7 1212.4 L735.3 1362.3 L800.0 1112.5" stroke="#72b7b2" stroke-width="4.2" fill="none" stroke-linejoin="round" stroke-linecap="round"/>
<path d="M88.8 1362.3 L153.5 1362.3 L218.1 1362.3" stroke="#54a24b" stroke-width="4.2" fill="none" stroke-linejoin="round" stroke-linecap="round"/>
<path d="M412.1 1362.3 L476.7 1362.3 L541.4 1362.3 L606.0 1362.3 L670.7 1362.3 L735.3 1362.3 L800.0 1362.3" stroke="#54a24b" stroke-width="4.2" fill="none" stroke-linejoin="round" stroke-linecap="round"/>
<circle cx="88.8" cy="1312.3" r="5.6" fill="#f58518"/>
<circle cx="153.5" cy="1362.3" r="5.6" fill="#54a24b"/>
<circle cx="282.8" cy="1362.3" r="5.6" fill="#f58518"/>
<circle cx="282.8" cy="1312.3" r="5.6" fill="#4c78a8"/>
<circle cx="476.7" cy="1312.3" r="5.6" fill="#f58518"/>
<circle cx="476.7" cy="1362.3" r="5.6" fill="#54a24b"/>
<circle cx="606.0" cy="1362.3" r="5.6" fill="#54a24b"/>
<circle cx="606.0" cy="1312.3" r="5.6" fill="#4c78a8"/>
<circle cx="670.7" cy="1362.3" r="5.6" fill="#54a24b"/>
<circle cx="670.7" cy="1312.3" r="5.6" fill="#e45756"/>
<circle cx="800.0" cy="1362.3" r="5.6" fill="#54a24b"/>
<circle cx="800.0" cy="1312.3" r="5.6" fill="#e45756"/>
<circle cx="800.0" cy="1262.4" r="5.6" fill="#4c78a8"/>
<circle cx="88.8" cy="1362.3" r="5.6" fill="#72b7b2"/>
<circle cx="153.5" cy="1312.3" r="5.6" fill="#72b7b2"/>
<circle cx="218.1" cy="1362.3" r="5.6" fill="#72b7b2"/>
<circle cx="282.8" cy="1262.4" r="5.6" fill="#72b7b2"/>
<circle cx="347.4" cy="1362.3" r="5.6" fill="#72b7b2"/>
<circle cx="412.1" cy="1362.3" r="5.6" fill="#72b7b2"/>
<circle cx="476.7" cy="1162.5" r="5.6" fill="#72b7b2"/>
<circle cx="541.4" cy="1362.3" r="5.6" fill="#72b7b2"/>
<circle cx="606.0" cy="962.6" r="5.6" fill="#72b7b2"/>
<circle cx="670.7" cy="1212.4" r="5.6" fill="#72b7b2"/>
<circle cx="735.3" cy="1362.3" r="5.6" fill="#72b7b2"/>
<circle cx="800.0" cy="1112.5" r="5.6" fill="#72b7b2"/>
<text transform="translate(80.8 1392.8) rotate(30)" font-size="20.5" fill="#111" textLength="121.7" lengthAdjust="spacingAndGlyphs">Apr 30, 2023</text>
<text transform="translate(210.1 1392.8) rotate(30)" font-size="20.5" fill="#111" textLength="128.0" lengthAdjust="spacingAndGlyphs">May 14, 2023</text>
<text transform="translate(339.4 1392.8) rotate(30)" font-size="20.5" fill="#111" textLength="128.0" lengthAdjust="spacingAndGlyphs">May 28, 2023</text>
<text transform="translate(468.7 1392.8) rotate(30)" font-size="20.5" fill="#111" textLength="122.2" lengthAdjust="spacingAndGlyphs">Jun 11, 2023</text>
<text transform="translate(598.0 1392.8) rotate(30)" font-size="20.5" fill="#111" textLength="122.9" lengthAdjust="spacingAndGlyphs">Jun 25, 2023</text>
<text transform="translate(727.3 1392.8) rotate(30)" font-size="20.5" fill="#111" textLength="115.8" lengthAdjust="spacingAndGlyphs">Jul 09, 2023</text>
<circle cx="852" cy="973.8" r="11.3" fill="#4c78a8"/>
<text x="872.8" y="980.0" font-size="19.5" fill="#111" textLength="87.6" lengthAdjust="spacingAndGlyphs">In-person</text>
<circle cx="852" cy="1005.8" r="11.3" fill="#f58518"/>
<text x="872.8" y="1012.0" font-size="19.5" fill="#111" textLength="52.8" lengthAdjust="spacingAndGlyphs">Other</text>
<circle cx="852" cy="1037.9" r="11.3" fill="#e45756"/>
<text x="872.8" y="1044.1" font-size="19.5" fill="#111" textLength="58.9" lengthAdjust="spacingAndGlyphs">Phone</text>
<circle cx="852" cy="1070.0" r="11.3" fill="#72b7b2"/>
<text x="872.8" y="1076.2" font-size="19.5" fill="#111" textLength="95.5" lengthAdjust="spacingAndGlyphs">Sent Email</text>
<circle cx="852" cy="1102.0" r="11.3" fill="#54a24b"/>
<text x="872.8" y="1108.2" font-size="19.5" fill="#111" textLength="51.7" lengthAdjust="spacingAndGlyphs">Video</text>
</svg>

</div></body></html>
